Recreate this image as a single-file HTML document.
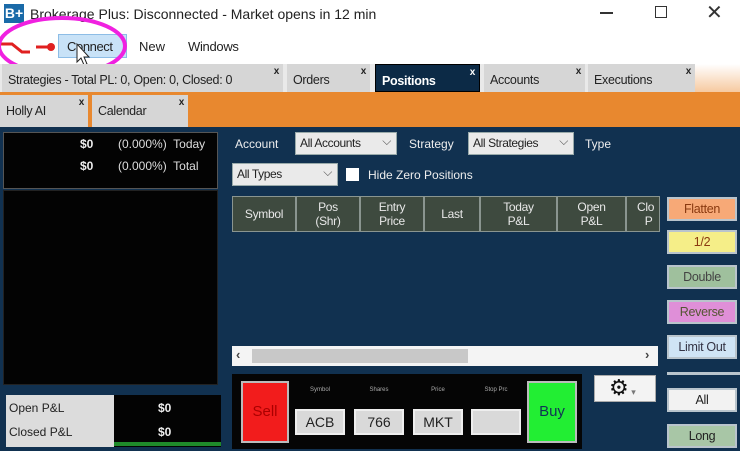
<!DOCTYPE html>
<html><head><style>
*{margin:0;padding:0;box-sizing:border-box}
body{width:740px;height:451px;overflow:hidden;background:#fff;font-family:"Liberation Sans",sans-serif;position:relative;font-size:12px;color:#222}
.a{position:absolute}
.tab{position:absolute;background:#d6d6d6;font-size:12.5px;color:#222;padding:9px 0 0 6px;height:28px;letter-spacing:-0.3px}
.x{position:absolute;right:4px;top:2px;font-size:10px;font-weight:bold}
.sel{position:absolute;background:#eaeaea;border:1px solid #9aa;color:#222;font-size:12px;padding:3px 4px;letter-spacing:-0.4px}
.sel:after{content:"⌵";position:absolute;right:5px;top:1px;color:#555}
.hd{position:absolute;top:196px;height:36px;background:#3e4a3f;border:1px solid #8a9590;color:#e8e8e8;font-size:12px;text-align:center;display:flex;align-items:center;justify-content:center;line-height:14px;letter-spacing:-0.3px}
.rb{position:absolute;left:667px;width:70px;height:24px;border:2px solid #b9c4cc;font-size:12.5px;text-align:center;line-height:20px;letter-spacing:-0.3px}
.ob{position:absolute;top:409px;height:26px;background:#d9d9d9;border:2px solid #eee;text-align:center;font-size:14px;line-height:22px;color:#222}
.lb{position:absolute;top:387px;font-size:6px;color:#aaa;text-align:center}
</style></head><body>
<div class="a" style="left:4px;top:4px;width:20px;height:19px;background:#1a6aa8;color:#fff;font-weight:bold;font-size:14px;line-height:19px;text-align:center">B+</div>
<div class="a" style="left:30px;top:6px;font-size:14px;color:#222">Brokerage Plus: Disconnected - Market opens in 12 min</div>
<div class="a" style="left:600px;top:12px;width:13px;height:1.5px;background:#333"></div>
<div class="a" style="left:655px;top:6px;width:12px;height:12px;border:1.5px solid #333"></div>
<div class="a" style="left:706px;top:0px;font-size:20px;color:#333">✕</div>
<div class="a" style="left:58px;top:34px;width:69px;height:24px;background:#c8e2f7;border:1px solid #8dbde6"></div>
<div class="a" style="left:67px;top:39px;font-size:13px;letter-spacing:-0.4px">Connect</div>
<div class="a" style="left:139px;top:39px;font-size:13px">New</div>
<div class="a" style="left:188px;top:39px;font-size:13px;letter-spacing:-0.3px">Windows</div>
<svg class="a" style="left:0;top:14px" width="140" height="64">
<path d="M0 30 L12 30 L22 38 L30 38" stroke="#e02020" stroke-width="3" fill="none"/>
<path d="M36 33 L48 33" stroke="#e02020" stroke-width="3"/><circle cx="51" cy="33" r="4" fill="#e02020"/>
<ellipse cx="62" cy="32" rx="63" ry="28" stroke="#f020e0" stroke-width="4" fill="none"/>
<path d="M77 30 L77 48 L81 44 L84 51 L87 50 L84 43 L89 43 Z" fill="#fff" stroke="#222" stroke-width="1"/>
</svg>
<div class="a" style="left:0;top:64px;width:740px;height:63px;background:#e9e9e9"></div>
<div class="a" style="left:695px;top:64px;width:45px;height:28px;background:linear-gradient(#fff,#f6c9a0)"></div>
<div class="tab" style="left:2px;top:64px;width:281px">Strategies - Total PL: 0, Open: 0, Closed: 0<span class="x">x</span></div>
<div class="tab" style="left:287px;top:64px;width:83px">Orders<span class="x">x</span></div>
<div class="tab" style="left:375px;top:64px;width:105px;background:#0c2a46;color:#fff;font-weight:bold;border:1px solid #000">Positions<span class="x" style="color:#fff">x</span></div>
<div class="tab" style="left:484px;top:64px;width:101px">Accounts<span class="x">x</span></div>
<div class="tab" style="left:588px;top:64px;width:107px">Executions<span class="x">x</span></div>
<div class="a" style="left:0;top:92px;width:740px;height:35px;background:#e8882f"></div>
<div class="tab" style="left:0;top:95px;width:88px;height:32px">Holly AI<span class="x">x</span></div>
<div class="tab" style="left:92px;top:95px;width:96px;height:32px">Calendar<span class="x">x</span></div>
<div class="a" style="left:0;top:127px;width:740px;height:324px;background:#113150"></div>
<div class="a" style="left:3px;top:132px;width:215px;height:57px;background:#030303;border:1px solid #555"></div>
<div class="a" style="left:80px;top:137px;color:#eee;font-size:12px;font-weight:bold">$0</div>
<div class="a" style="left:118px;top:137px;color:#ddd;font-size:12px">(0.000%)&nbsp; Today</div>
<div class="a" style="left:80px;top:159px;color:#eee;font-size:12px;font-weight:bold">$0</div>
<div class="a" style="left:118px;top:159px;color:#ddd;font-size:12px">(0.000%)&nbsp; Total</div>
<div class="a" style="left:3px;top:190px;width:215px;height:195px;background:#030303;border:1px solid #222"></div>
<div class="a" style="left:6px;top:395px;width:108px;height:52px;background:#dcdcdc"></div>
<div class="a" style="left:9px;top:401px;font-size:12px">Open P&amp;L</div>
<div class="a" style="left:9px;top:425px;font-size:12px">Closed P&amp;L</div>
<div class="a" style="left:114px;top:395px;width:107px;height:52px;background:#030303"></div>
<div class="a" style="left:158px;top:401px;color:#eee;font-weight:bold">$0</div>
<div class="a" style="left:158px;top:425px;color:#eee;font-weight:bold">$0</div>
<div class="a" style="left:114px;top:442px;width:107px;height:4px;background:#1f8a2a"></div>
<div class="a" style="left:235px;top:137px;color:#eee;font-size:12px">Account</div>
<div class="sel" style="left:295px;top:132px;width:102px;height:23px">All Accounts</div>
<div class="a" style="left:409px;top:137px;color:#eee">Strategy</div>
<div class="sel" style="left:468px;top:132px;width:106px;height:23px">All Strategies</div>
<div class="a" style="left:585px;top:137px;color:#eee">Type</div>
<div class="sel" style="left:232px;top:163px;width:106px;height:23px">All Types</div>
<div class="a" style="left:346px;top:168px;width:13px;height:13px;background:#fff"></div>
<div class="a" style="left:368px;top:168px;color:#eee">Hide Zero Positions</div>
<div class="hd" style="left:232px;width:64px">Symbol</div>
<div class="hd" style="left:296px;width:64px">Pos<br>(Shr)</div>
<div class="hd" style="left:360px;width:64px">Entry<br>Price</div>
<div class="hd" style="left:424px;width:56px">Last</div>
<div class="hd" style="left:480px;width:77px">Today<br>P&amp;L</div>
<div class="hd" style="left:557px;width:69px">Open<br>P&amp;L</div>
<div class="hd" style="left:626px;width:34px;justify-content:flex-start;padding-left:10px">Clo<br>&nbsp;&nbsp;P</div>
<div class="a" style="left:232px;top:346px;width:426px;height:20px;background:#f4f4f4"></div>
<div class="a" style="left:252px;top:349px;width:216px;height:14px;background:#c8c8c8"></div>
<div class="a" style="left:236px;top:347px;font-size:13px;font-weight:bold;color:#444">‹</div>
<div class="a" style="left:645px;top:347px;font-size:13px;font-weight:bold;color:#444">›</div>
<div class="a" style="left:232px;top:374px;width:350px;height:75px;background:#050505"></div>
<div class="a" style="left:241px;top:381px;width:48px;height:62px;background:#f21c1c;border:2px solid #bbb;color:#a00;font-size:15px;text-align:center;line-height:58px">Sell</div>
<div class="a" style="left:527px;top:381px;width:50px;height:62px;background:#22ee33;border:2px solid #bbb;color:#135;font-size:15px;text-align:center;line-height:58px">Buy</div>
<div class="lb" style="left:295px;width:50px">Symbol</div>
<div class="lb" style="left:354px;width:50px">Shares</div>
<div class="lb" style="left:413px;width:50px">Price</div>
<div class="lb" style="left:471px;width:50px">Stop Prc</div>
<div class="ob" style="left:295px;width:50px">ACB</div>
<div class="ob" style="left:354px;width:50px">766</div>
<div class="ob" style="left:413px;width:50px">MKT</div>
<div class="ob" style="left:471px;width:50px"></div>
<div class="a" style="left:594px;top:375px;width:62px;height:27px;background:#f3f3f3;border:1px solid #aaa;font-size:22px;line-height:24px;padding-left:14px;color:#111">⚙<span style="font-size:9px;color:#777"> ▾</span></div>
<div class="rb" style="top:197px;background:#f7a977;color:#8a3a10">Flatten</div>
<div class="rb" style="top:230px;background:#f5ee88;color:#8a3a10">1/2</div>
<div class="rb" style="top:265px;background:#9fc09d;color:#444">Double</div>
<div class="rb" style="top:300px;background:#df8fd8;color:#553">Reverse</div>
<div class="rb" style="top:335px;background:#cfe4f5;color:#334">Limit Out</div>
<div class="a" style="left:667px;top:372px;width:73px;height:3px;background:#b9c4cc"></div>
<div class="rb" style="top:388px;background:#f2f2f2;color:#222">All</div>
<div class="rb" style="top:424px;background:#a8c6a6;color:#222">Long</div>
</body></html>
